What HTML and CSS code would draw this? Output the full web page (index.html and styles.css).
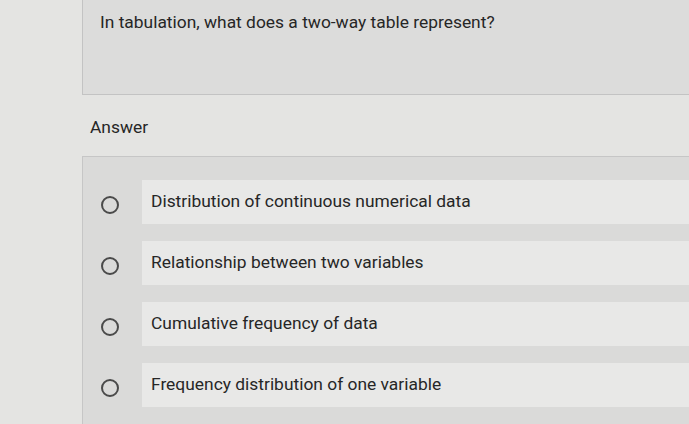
FILE: index.html
```html
<!DOCTYPE html>
<html>
<head>
<meta charset="utf-8">
<link rel="stylesheet" href="styles.css">
</head>
<body>
<div class="page">
  <div class="question">In tabulation, what does a two-way table represent?</div>
  <div class="answer-label">Answer</div>
  <div class="answers">
    <div class="option"><span class="radio"></span><div class="band">Distribution of continuous numerical data</div></div>
    <div class="option"><span class="radio"></span><div class="band">Relationship between two variables</div></div>
    <div class="option"><span class="radio"></span><div class="band">Cumulative frequency of data</div></div>
    <div class="option"><span class="radio"></span><div class="band">Frequency distribution of one variable</div></div>
  </div>
</div>
</body>
</html>
```

FILE: styles.css
```css
html, body {
  margin: 0;
  padding: 0;
  background: #e4e4e2;
  overflow: hidden;
}
.page {
  width: 689px;
  height: 424px;
  overflow: hidden;
  padding-left: 82px;
  box-sizing: border-box;
  font-family: Roboto, "Liberation Sans", sans-serif;
  color: #262626;
}
.question {
  height: 95px;
  box-sizing: border-box;
  background: #dcdcdb;
  border-left: 1px solid #c3c3c3;
  border-bottom: 1px solid #c3c3c3;
  padding: 10px 0 0 17px;
  font-size: 17.4px;
  line-height: 24px;
}
.answer-label {
  padding: 21px 0 0 8px;
  height: 61px;
  box-sizing: border-box;
  font-size: 17.4px;
  line-height: 22px;
}
.answers {
  height: 300px;
  background: #dadad9;
  border-left: 1px solid #c6c6c6;
  border-top: 1px solid #c6c6c6;
  padding-top: 23px;
  display: flex;
  flex-direction: column;
  gap: 17px;
}
.option {
  display: flex;
  align-items: center;
  height: 44px;
}
.radio {
  width: 14px;
  height: 14px;
  border: 2px solid #4a4a4a;
  border-radius: 50%;
  margin: 6px 0 0 18px;
  flex: none;
}
.band {
  margin-left: 23px;
  flex: 1;
  height: 44px;
  background: #e8e8e7;
  display: flex;
  align-items: center;
  padding-left: 9px;
  font-size: 17.4px;
  padding-bottom: 2px;
  box-sizing: border-box;
}
```
